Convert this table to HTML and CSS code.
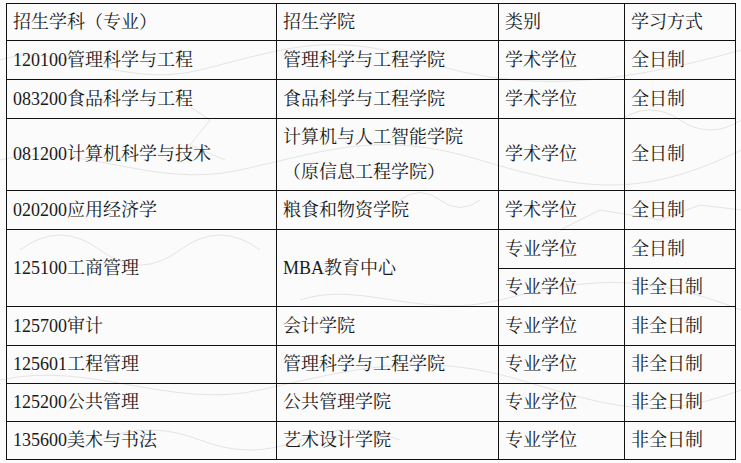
FILE: index.html
```html
<!DOCTYPE html>
<html lang="zh">
<head>
<meta charset="utf-8">
<title>招生学科</title>
<link rel="stylesheet" href="styles.css">
</head>
<body>
<div class="page">
  <svg class="bg" width="741" height="463" viewBox="0 0 741 463" aria-hidden="true">
    <g fill="none" stroke="#e4e4e4" stroke-width="1">
      <path d="M0 60 C60 40 120 90 200 70 S330 30 420 60 S600 90 741 50"/>
      <path d="M0 160 C80 140 150 190 240 170 S380 130 480 160 S640 200 741 150"/>
      <path d="M20 250 q40 -30 80 0 t80 0 t80 0"/>
      <path d="M300 300 C360 280 420 320 500 300 S640 270 741 310"/>
      <path d="M0 380 C90 360 170 410 260 390 S420 350 520 380 S660 420 741 390"/>
      <path d="M560 230 l40 -20 l60 10 l40 -15 l41 5"/>
      <path d="M620 120 q30 -20 60 0 t61 0"/>
      <path d="M100 440 q50 -20 100 0 t100 0 t100 0"/>
      <path d="M180 100 l30 20 l-20 25 l35 15"/>
      <path d="M400 200 q20 -15 40 0 t40 0"/>
    </g>
  </svg>
  <table class="grid">
    <colgroup>
      <col class="c1"><col class="c2"><col class="c3"><col class="c4">
    </colgroup>
    <tr class="head"><td>招生学科（专业）</td><td>招生学院</td><td>类别</td><td>学习方式</td></tr>
    <tr class="r39"><td>120100管理科学与工程</td><td>管理科学与工程学院</td><td>学术学位</td><td>全日制</td></tr>
    <tr class="r39"><td>083200食品科学与工程</td><td>食品科学与工程学院</td><td>学术学位</td><td>全日制</td></tr>
    <tr class="tall"><td>081200计算机科学与技术</td><td>计算机与人工智能学院<br>（原信息工程学院）</td><td>学术学位</td><td>全日制</td></tr>
    <tr class="r39"><td>020200应用经济学</td><td>粮食和物资学院</td><td>学术学位</td><td>全日制</td></tr>
    <tr class="r39"><td rowspan="2">125100工商管理</td><td rowspan="2">MBA教育中心</td><td>专业学位</td><td>全日制</td></tr>
    <tr class="r38"><td>专业学位</td><td>非全日制</td></tr>
    <tr class="r39"><td>125700审计</td><td>会计学院</td><td>专业学位</td><td>非全日制</td></tr>
    <tr class="r38"><td>125601工程管理</td><td>管理科学与工程学院</td><td>专业学位</td><td>非全日制</td></tr>
    <tr class="r38"><td>125200公共管理</td><td>公共管理学院</td><td>专业学位</td><td>非全日制</td></tr>
    <tr class="r38"><td>135600美术与书法</td><td>艺术设计学院</td><td>专业学位</td><td>非全日制</td></tr>
  </table>
</div>
</body>
</html>
```

FILE: styles.css
```css
html, body {
  margin: 0;
  padding: 0;
  background: #fbfbfb;
}
.page {
  position: relative;
  width: 741px;
  height: 463px;
  overflow: hidden;
  padding: 3px 0 0 6px;
  box-sizing: border-box;
}
.bg {
  position: absolute;
  left: 0;
  top: 0;
}
.grid {
  position: relative;
  border-collapse: collapse;
  table-layout: fixed;
  width: 729px;
  font-family: "Liberation Serif", "Noto Serif CJK SC", "Noto Sans CJK SC", serif;
  font-size: 18px;
  color: #1a1a1a;
}
.c1 { width: 270px; }
.c2 { width: 222px; }
.c3 { width: 126px; }
.c4 { width: 111px; }
.grid td {
  border: 1px solid #111;
  height: 38px;
  padding: 0 0 0 6px;
  line-height: 35px;
  vertical-align: middle;
  white-space: nowrap;
  box-sizing: border-box;
}
.grid tr.head td {
  height: 37px;
}
.grid tr.r39 td {
  height: 39px;
}
.grid tr.r38 td {
  height: 38px;
}
.grid tr.tall td {
  height: 72px;
}
```
